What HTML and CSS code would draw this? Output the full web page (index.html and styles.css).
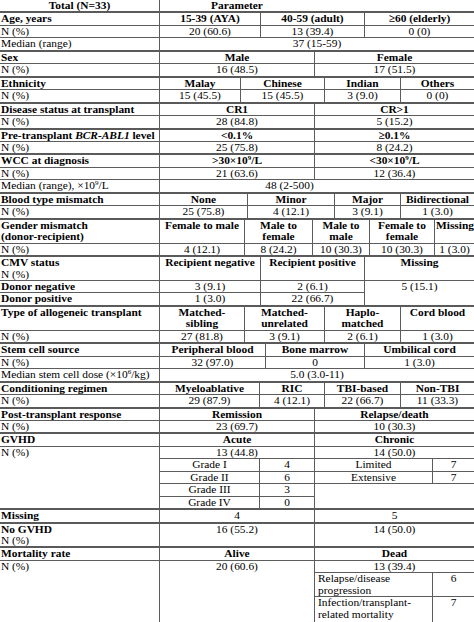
FILE: index.html
```html
<!DOCTYPE html>
<html>
<head>
<meta charset="utf-8">
<link rel="stylesheet" href="styles.css">
</head>
<body>
<div class="tbl">
  <div class="row g2 first">
    <div class="cell lab b mid">Total (N=33)</div>
    <div class="cell b span2">Parameter</div>
  </div>

  <div class="row g3 sec">
    <div class="cell lab b">Age, years</div>
    <div class="cell b">15-39 (AYA)</div>
    <div class="cell b">40-59 (adult)</div>
    <div class="cell b">&ge;60 (elderly)</div>
  </div>
  <div class="row g3">
    <div class="cell lab">N (%)</div>
    <div class="cell">20 (60.6)</div>
    <div class="cell">13 (39.4)</div>
    <div class="cell">0 (0)</div>
  </div>
  <div class="row g1">
    <div class="cell lab">Median (range)</div>
    <div class="cell">37 (15-59)</div>
  </div>

  <div class="row g2 sec">
    <div class="cell lab b">Sex</div>
    <div class="cell b">Male</div>
    <div class="cell b">Female</div>
  </div>
  <div class="row g2">
    <div class="cell lab">N (%)</div>
    <div class="cell">16 (48.5)</div>
    <div class="cell">17 (51.5)</div>
  </div>

  <div class="row eth sec">
    <div class="cell lab b">Ethnicity</div>
    <div class="cell b">Malay</div>
    <div class="cell b">Chinese</div>
    <div class="cell b">Indian</div>
    <div class="cell b">Others</div>
  </div>
  <div class="row eth">
    <div class="cell lab">N (%)</div>
    <div class="cell">15 (45.5)</div>
    <div class="cell">15 (45.5)</div>
    <div class="cell">3 (9.0)</div>
    <div class="cell">0 (0)</div>
  </div>

  <div class="row g2 sec">
    <div class="cell lab b">Disease status at transplant</div>
    <div class="cell b">CR1</div>
    <div class="cell b">CR&gt;1</div>
  </div>
  <div class="row g2">
    <div class="cell lab">N (%)</div>
    <div class="cell">28 (84.8)</div>
    <div class="cell">5 (15.2)</div>
  </div>

  <div class="row g2 sec">
    <div class="cell lab b">Pre-transplant <i>BCR-ABL1</i> level</div>
    <div class="cell b">&lt;0.1%</div>
    <div class="cell b">&ge;0.1%</div>
  </div>
  <div class="row g2">
    <div class="cell lab">N (%)</div>
    <div class="cell">25 (75.8)</div>
    <div class="cell">8 (24.2)</div>
  </div>

  <div class="row g2 sec">
    <div class="cell lab b">WCC at diagnosis</div>
    <div class="cell b">&gt;30&times;10<sup>9</sup>/L</div>
    <div class="cell b">&lt;30&times;10<sup>9</sup>/L</div>
  </div>
  <div class="row g2">
    <div class="cell lab">N (%)</div>
    <div class="cell">21 (63.6)</div>
    <div class="cell">12 (36.4)</div>
  </div>
  <div class="row g1">
    <div class="cell lab">Median (range), &times;10<sup>9</sup>/L</div>
    <div class="cell shift">48 (2-500)</div>
  </div>

  <div class="row blood sec">
    <div class="cell lab b">Blood type mismatch</div>
    <div class="cell b">None</div>
    <div class="cell b">Minor</div>
    <div class="cell b">Major</div>
    <div class="cell b">Bidirectional</div>
  </div>
  <div class="row blood">
    <div class="cell lab">N (%)</div>
    <div class="cell">25 (75.8)</div>
    <div class="cell">4 (12.1)</div>
    <div class="cell">3 (9.1)</div>
    <div class="cell">1 (3.0)</div>
  </div>

  <div class="row gender sec">
    <div class="cell lab b">Gender mismatch<br>(donor-recipient)</div>
    <div class="cell b">Female to male</div>
    <div class="cell b">Male to<br>female</div>
    <div class="cell b">Male to<br>male</div>
    <div class="cell b">Female to<br>female</div>
    <div class="cell b">Missing</div>
  </div>
  <div class="row gender">
    <div class="cell lab">N (%)</div>
    <div class="cell">4 (12.1)</div>
    <div class="cell">8 (24.2)</div>
    <div class="cell">10 (30.3)</div>
    <div class="cell">10 (30.3)</div>
    <div class="cell">1 (3.0)</div>
  </div>

  <div class="row g3 block">
    <div class="cell lab sec"><b>CMV status</b><br>N (%)</div>
    <div class="cell b sec">Recipient negative</div>
    <div class="cell b sec">Recipient positive</div>
    <div class="cell b sec">Missing</div>
    <div class="cell lab b">Donor negative</div>
    <div class="cell">3 (9.1)</div>
    <div class="cell">2 (6.1)</div>
    <div class="cell rs2">5 (15.1)</div>
    <div class="cell lab b">Donor positive</div>
    <div class="cell">1 (3.0)</div>
    <div class="cell">22 (66.7)</div>
  </div>

  <div class="row type sec">
    <div class="cell lab b">Type of allogeneic transplant</div>
    <div class="cell b">Matched-<br>sibling</div>
    <div class="cell b">Matched-<br>unrelated</div>
    <div class="cell b">Haplo-<br>matched</div>
    <div class="cell b">Cord blood</div>
  </div>
  <div class="row type">
    <div class="cell lab">N (%)</div>
    <div class="cell">27 (81.8)</div>
    <div class="cell">3 (9.1)</div>
    <div class="cell">2 (6.1)</div>
    <div class="cell">1 (3.0)</div>
  </div>

  <div class="row stem sec">
    <div class="cell lab b">Stem cell source</div>
    <div class="cell b">Peripheral blood</div>
    <div class="cell b">Bone marrow</div>
    <div class="cell b">Umbilical cord</div>
  </div>
  <div class="row stem">
    <div class="cell lab">N (%)</div>
    <div class="cell">32 (97.0)</div>
    <div class="cell">0</div>
    <div class="cell">1 (3.0)</div>
  </div>
  <div class="row g1">
    <div class="cell lab">Median stem cell dose (&times;10<sup>6</sup>/kg)</div>
    <div class="cell">5.0 (3.0-11)</div>
  </div>

  <div class="row cond sec">
    <div class="cell lab b">Conditioning regimen</div>
    <div class="cell b">Myeloablative</div>
    <div class="cell b">RIC</div>
    <div class="cell b">TBI-based</div>
    <div class="cell b">Non-TBI</div>
  </div>
  <div class="row cond">
    <div class="cell lab">N (%)</div>
    <div class="cell">29 (87.9)</div>
    <div class="cell">4 (12.1)</div>
    <div class="cell">22 (66.7)</div>
    <div class="cell">11 (33.3)</div>
  </div>

  <div class="row g2 sec">
    <div class="cell lab b">Post-transplant response</div>
    <div class="cell b">Remission</div>
    <div class="cell b">Relapse/death</div>
  </div>
  <div class="row g2">
    <div class="cell lab">N (%)</div>
    <div class="cell">23 (69.7)</div>
    <div class="cell">10 (30.3)</div>
  </div>

  <div class="row gvhd block">
    <div class="cell lab b sec">GVHD</div>
    <div class="cell b sec cs2">Acute</div>
    <div class="cell b sec cs2">Chronic</div>
    <div class="cell lab rs5">N (%)</div>
    <div class="cell cs2">13 (44.8)</div>
    <div class="cell cs2">14 (50.0)</div>
    <div class="cell">Grade I</div>
    <div class="cell">4</div>
    <div class="cell">Limited</div>
    <div class="cell">7</div>
    <div class="cell">Grade II</div>
    <div class="cell">6</div>
    <div class="cell">Extensive</div>
    <div class="cell">7</div>
    <div class="cell">Grade III</div>
    <div class="cell">3</div>
    <div class="cell cs2 rs2"></div>
    <div class="cell">Grade IV</div>
    <div class="cell">0</div>
    <div class="cell lab b sec c1">Missing</div>
    <div class="cell sec cs2">4</div>
    <div class="cell sec cs2">5</div>
    <div class="cell lab sec c1"><b>No GVHD</b><br>N (%)</div>
    <div class="cell sec cs2">16 (55.2)</div>
    <div class="cell sec cs2">14 (50.0)</div>
  </div>

  <div class="row mort block">
    <div class="cell lab b sec">Mortality rate</div>
    <div class="cell b sec">Alive</div>
    <div class="cell b sec cs2">Dead</div>
    <div class="cell lab rs3">N (%)</div>
    <div class="cell rs3">20 (60.6)</div>
    <div class="cell cs2">13 (39.4)</div>
    <div class="cell left">Relapse/disease<br>progression</div>
    <div class="cell">6</div>
    <div class="cell left last">Infection/transplant-<br>related mortality</div>
    <div class="cell last">7</div>
  </div>
</div>
</body>
</html>
```

FILE: styles.css
```css
html, body {
  margin: 0;
  padding: 0;
  background: #ffffff;
}

body {
  font-family: "Liberation Serif", "Times New Roman", serif;
  font-size: 11.4px;
  line-height: 11.45px;
  color: #000000;
}

.tbl {
  width: 474px;
  display: flex;
  flex-direction: column;
}

.row {
  display: grid;
}

.g1 { grid-template-columns: 159px 1fr; }
.g2 { grid-template-columns: 159px 155px 1fr; }
.g3 { grid-template-columns: 159px 101px 104px 1fr; }
.eth { grid-template-columns: 159px 81px 84px 76px 1fr; }
.blood { grid-template-columns: 159px 88px 87px 66px 1fr; }
.gender { grid-template-columns: 159px 85px 68px 57px 65px 1fr; }
.type { grid-template-columns: 159px 85px 80px 76px 1fr; }
.stem { grid-template-columns: 159px 106px 99px 1fr; }
.cond { grid-template-columns: 159px 100px 65px 76px 1fr; }
.gvhd { grid-template-columns: 159px 100px 55px 118px 1fr; }
.mort { grid-template-columns: 159px 155px 118px 1fr; }

.cell {
  border-top: 1px solid #5c5c5c;
  border-left: 1px solid #5c5c5c;
  text-align: center;
  padding: 0 1px;
  white-space: nowrap;
}

.row.first > .cell { border-top: none; }

.sec > .cell,
.cell.sec {
  border-top: 2px solid #5a5a5a;
}

.lab {
  border-left: none;
  text-align: left;
  padding-left: 1px;
}

.lab.mid { text-align: center; }

.left {
  text-align: left;
  padding-left: 3px;
}

.b { font-weight: bold; }

.c1 { grid-column: 1; }
.cs2 { grid-column: span 2; }
.span2 { grid-column: span 1; }
.rs2 { grid-row: span 2; }
.rs3 { grid-row: span 3; }
.rs5 { grid-row: span 5; }

.shift { padding-right: 56px; }

.last { padding-bottom: 8px; }

sup {
  font-size: 7px;
  line-height: 0;
  vertical-align: 4px;
}
```
